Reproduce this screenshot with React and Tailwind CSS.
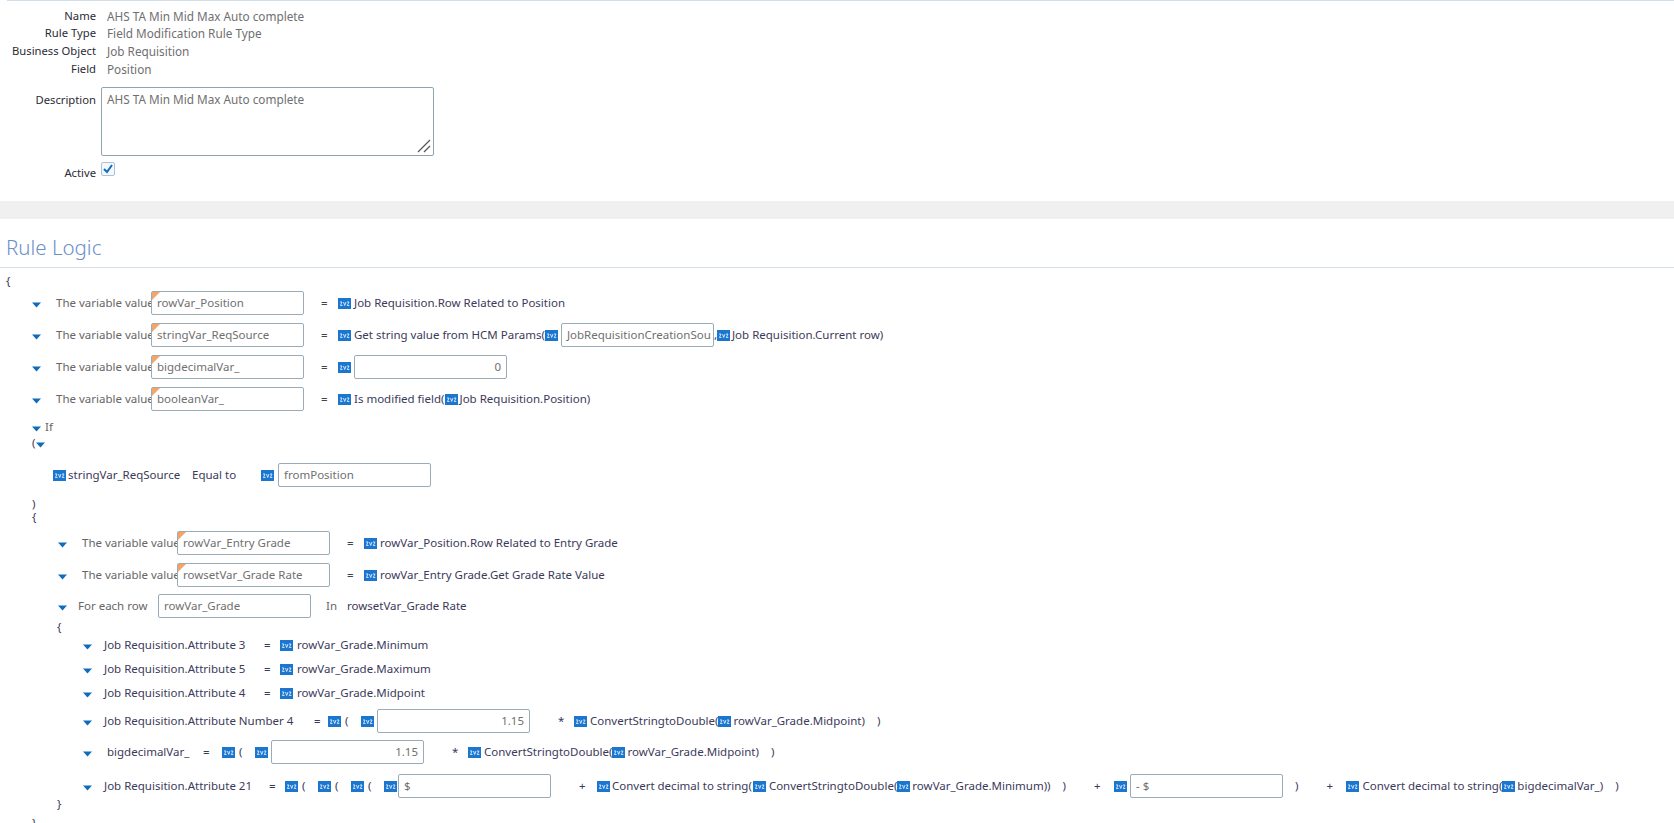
import React from 'react';
import clsx from 'clsx';

// small blue "fx" style badge that sits before every expression
function VarIcon({ className }) {
  return (
    <svg viewBox="0 0 13 11" className={clsx('w-[13px] h-[11px] shrink-0', className)}>
      <rect width="13" height="11" fill="#1b76cf" />
      <path d="M2 4h2L2.5 7.5h2M5.5 4l1.2 3.5L8 4M9 4h2L9.3 7.5h2" fill="none" stroke="#dcecfa" strokeWidth="0.9" />
    </svg>
  );
}

function Arrow({ className }) {
  return (
    <svg viewBox="0 0 9 6" className={clsx('w-[9px] h-[6px] shrink-0 translate-y-[2px]', className)}>
      <path d="M0 0.5h9L4.5 5.5z" fill="#0f6cbd" />
    </svg>
  );
}

function Field({ value, flag, right, className }) {
  return (
    <div
      className={clsx(
        'relative w-[153px] h-[24px] shrink-0 flex items-center px-[5px] bg-white border border-[#9aacb8] rounded-[2px] text-[#6f6f6f]',
        right ? 'justify-end' : 'justify-start',
        className
      )}
    >
      {flag && (
        <svg viewBox="0 0 8 8" className="absolute left-0 top-0 w-[8px] h-[8px]">
          <path d="M0 0h8L0 8z" fill="#f2a469" />
        </svg>
      )}
      <span className="whitespace-nowrap">{value}</span>
    </div>
  );
}

function Row({ className, children }) {
  return <div className={clsx('flex items-center whitespace-nowrap', className)}>{children}</div>;
}

const Gray = ({ children, className }) => <span className={clsx('text-[#666666]', className)}>{children}</span>;

function Assign({ value, indent, children }) {
  return (
    <Row className={clsx('h-8', indent)}>
      <Arrow />
      <Gray className="ml-[15px] w-[95px]">The variable value</Gray>
      <Field value={value} flag />
      <span className="ml-[17px] w-[17px] text-[#444]">=</span>
      <VarIcon />
      {children}
    </Row>
  );
}

function AttrRow({ label, value }) {
  return (
    <Row className="h-6 pl-[83px] text-[#3b3a5a]">
      <Arrow />
      <span className="ml-[12px] w-[160px]">{label}</span>
      <span className="w-[16px]">=</span>
      <VarIcon />
      <span className="ml-[4px]">{value}</span>
    </Row>
  );
}

export default function App() {
  return (
    <div className="h-[823px] overflow-hidden bg-white text-[11.5px] leading-4 font-['Noto_Sans',sans-serif] text-[#3b3a5a]">
      <div className="ml-[7px] h-px bg-[#cfdeea]" />

      {/* Rule header form */}
      <div className="grid grid-cols-[96px_1fr] gap-x-[11px] pt-[7px] h-[200px] content-start">
        <span className="h-[17px] text-right text-[11.25px] text-[#2b2b36]">Name</span>
        <span className="h-[17px] text-[11.75px] text-[#6f6f6f]">AHS TA Min Mid Max Auto complete</span>
        <span className="h-[18px] text-right text-[11.25px] text-[#2b2b36]">Rule Type</span>
        <span className="h-[18px] text-[11.75px] text-[#6f6f6f]">Field Modification Rule Type</span>
        <span className="h-[18px] text-right text-[11.25px] text-[#2b2b36]">Business Object</span>
        <span className="h-[18px] text-[11.75px] text-[#6f6f6f]">Job Requisition</span>
        <span className="h-[17px] text-right text-[11.25px] text-[#2b2b36]">Field</span>
        <span className="h-[17px] text-[11.75px] text-[#6f6f6f]">Position</span>

        <span className="mt-[14px] text-right text-[11.25px] text-[#2b2b36]">Description</span>
        <div className="relative -ml-[6px] mt-[9px] w-[333px] h-[69px] border border-[#8fa3b0] rounded-[2px] px-[5px] pt-[3px] text-[11.75px] text-[#6f6f6f]">
          AHS TA Min Mid Max Auto complete
          <svg viewBox="0 0 14 14" className="absolute right-[2px] bottom-[2px] w-[14px] h-[14px]">
            <path d="M1 13L13 1M7 13l6-6" stroke="#555" strokeWidth="1.2" fill="none" />
          </svg>
        </div>

        <span className="mt-[9px] text-right text-[11.25px] text-[#2b2b36]">Active</span>
        <div className="-ml-[6px] mt-[6px] w-[14px] h-[14px] bg-[#f4f8fc] border border-[#a9c3dc] rounded-[2px] flex items-center justify-center">
          <svg viewBox="0 0 12 12" className="w-[12px] h-[12px]">
            <path d="M2 6l3 3 5-7" stroke="#0f6cbd" strokeWidth="2" fill="none" />
          </svg>
        </div>
      </div>

      <div className="h-[18px] bg-[#f0f0f0]" />

      {/* Rule logic */}
      <div className="pl-[6px] pt-[14px] h-[49px] border-b border-[#d5dfe7] text-[20.5px] leading-[28px] font-light text-[#6c8fc7]">
        Rule Logic
      </div>

      <div className="mt-[5px]">
        <Row className="h-4 pl-[6px] mt-[2px] -mb-[2px]">{'{'}</Row>

        <Assign value="rowVar_Position" indent="pl-[32px]">
          <span className="ml-[3px]">Job Requisition.Row Related to Position</span>
        </Assign>
        <Assign value="stringVar_ReqSource" indent="pl-[32px]">
          <span className="ml-[3px]">Get string value from HCM Params(</span>
          <VarIcon />
          <Field value="JobRequisitionCreationSou" className="ml-[3px]" />
          <span>,</span>
          <VarIcon />
          <span className="ml-[2px]">Job Requisition.Current row)</span>
        </Assign>
        <Assign value="bigdecimalVar_" indent="pl-[32px]">
          <Field value="0" right className="ml-[3px]" />
        </Assign>
        <Assign value="booleanVar_" indent="pl-[32px]">
          <span className="ml-[3px]">Is modified field(</span>
          <VarIcon />
          <span className="ml-[2px]">Job Requisition.Position)</span>
        </Assign>

        <Row className="h-4 mt-[4px] pl-[32px]">
          <Arrow className="translate-y-[1px]" />
          <Gray className="ml-[4px]">If</Gray>
        </Row>
        <Row className="h-4 pl-[32px]">
          <span>(</span>
          <Arrow className="ml-[1px] translate-y-0" />
        </Row>

        <Row className="h-8 mt-[8px] pl-[53px]">
          <VarIcon />
          <span className="ml-[2px] w-[124px]">stringVar_ReqSource</span>
          <span className="w-[69px]">Equal to</span>
          <VarIcon />
          <Field value="fromPosition" className="ml-[4px]" />
        </Row>

        <Row className="h-4 mt-[5px] pl-[32px]">)</Row>
        <Row className="h-[14px] -mt-[2px] mb-[3px] pl-[32px]">{'{'}</Row>

        <Assign value="rowVar_Entry Grade" indent="pl-[58px]">
          <span className="ml-[3px]">rowVar_Position.Row Related to Entry Grade</span>
        </Assign>
        <Assign value="rowsetVar_Grade Rate" indent="pl-[58px]">
          <span className="ml-[3px]">rowVar_Entry Grade.Get Grade Rate Value</span>
        </Assign>

        <Row className="h-[30px] pl-[58px]">
          <Arrow />
          <Gray className="ml-[11px] w-[80px]">For each row</Gray>
          <Field value="rowVar_Grade" />
          <Gray className="ml-[15px] w-[21px]">In</Gray>
          <span>rowsetVar_Grade Rate</span>
        </Row>
        <Row className="h-3 pl-[57px]">{'{'}</Row>

        <AttrRow label="Job Requisition.Attribute 3" value="rowVar_Grade.Minimum" />
        <AttrRow label="Job Requisition.Attribute 5" value="rowVar_Grade.Maximum" />
        <AttrRow label="Job Requisition.Attribute 4" value="rowVar_Grade.Midpoint" />

        <Row className="h-8 pl-[83px]">
          <Arrow />
          <span className="ml-[12px] w-[210px]">Job Requisition.Attribute Number 4</span>
          <span className="w-[14px]">=</span>
          <VarIcon />
          <span className="ml-[4px] w-[16px]">(</span>
          <VarIcon />
          <Field value="1.15" right className="ml-[3px]" />
          <span className="ml-[28px] w-[16px]">*</span>
          <VarIcon />
          <span className="ml-[3px]">ConvertStringtoDouble(</span>
          <VarIcon />
          <span className="ml-[2px]">rowVar_Grade.Midpoint)</span>
          <span className="ml-[12px]">)</span>
        </Row>
        <Row className="h-[30px] pl-[83px]">
          <Arrow />
          <span className="ml-[15px] w-[96px]">bigdecimalVar_</span>
          <span className="w-[19px]">=</span>
          <VarIcon />
          <span className="ml-[4px] w-[16px]">(</span>
          <VarIcon />
          <Field value="1.15" right className="ml-[3px]" />
          <span className="ml-[28px] w-[16px]">*</span>
          <VarIcon />
          <span className="ml-[3px]">ConvertStringtoDouble(</span>
          <VarIcon />
          <span className="ml-[2px]">rowVar_Grade.Midpoint)</span>
          <span className="ml-[12px]">)</span>
        </Row>
        <Row className="h-8 mt-[3px] pl-[83px]">
          <Arrow />
          <span className="ml-[12px] w-[165px]">Job Requisition.Attribute 21</span>
          <span className="w-[16px]">=</span>
          <VarIcon />
          <span className="ml-[4px] w-[16px]">(</span>
          <VarIcon />
          <span className="ml-[4px] w-[16px]">(</span>
          <VarIcon />
          <span className="ml-[4px] w-[16px]">(</span>
          <VarIcon />
          <Field value="$" className="ml-[1px]" />
          <span className="ml-[28px] w-[18px]">+</span>
          <VarIcon />
          <span className="ml-[2px]">Convert decimal to string(</span>
          <VarIcon className="ml-[1px]" />
          <span className="ml-[3px]">ConvertStringtoDouble(</span>
          <VarIcon />
          <span className="ml-[2px]">rowVar_Grade.Minimum))</span>
          <span className="ml-[12px]">)</span>
          <span className="ml-[28px] w-[20px]">+</span>
          <VarIcon />
          <Field value="- $" className="ml-[3px]" />
          <span className="ml-[12px]">)</span>
          <span className="ml-[28px] w-[20px]">+</span>
          <VarIcon />
          <span className="ml-[3px]">Convert decimal to string(</span>
          <VarIcon />
          <span className="ml-[2px]">bigdecimalVar_)</span>
          <span className="ml-[12px]">)</span>
        </Row>

        <Row className="h-4 -mt-[6px] pl-[57px]">{'}'}</Row>
        <Row className="h-4 pl-[32px] mt-[3px]">{'}'}</Row>
      </div>
    </div>
  );
}
